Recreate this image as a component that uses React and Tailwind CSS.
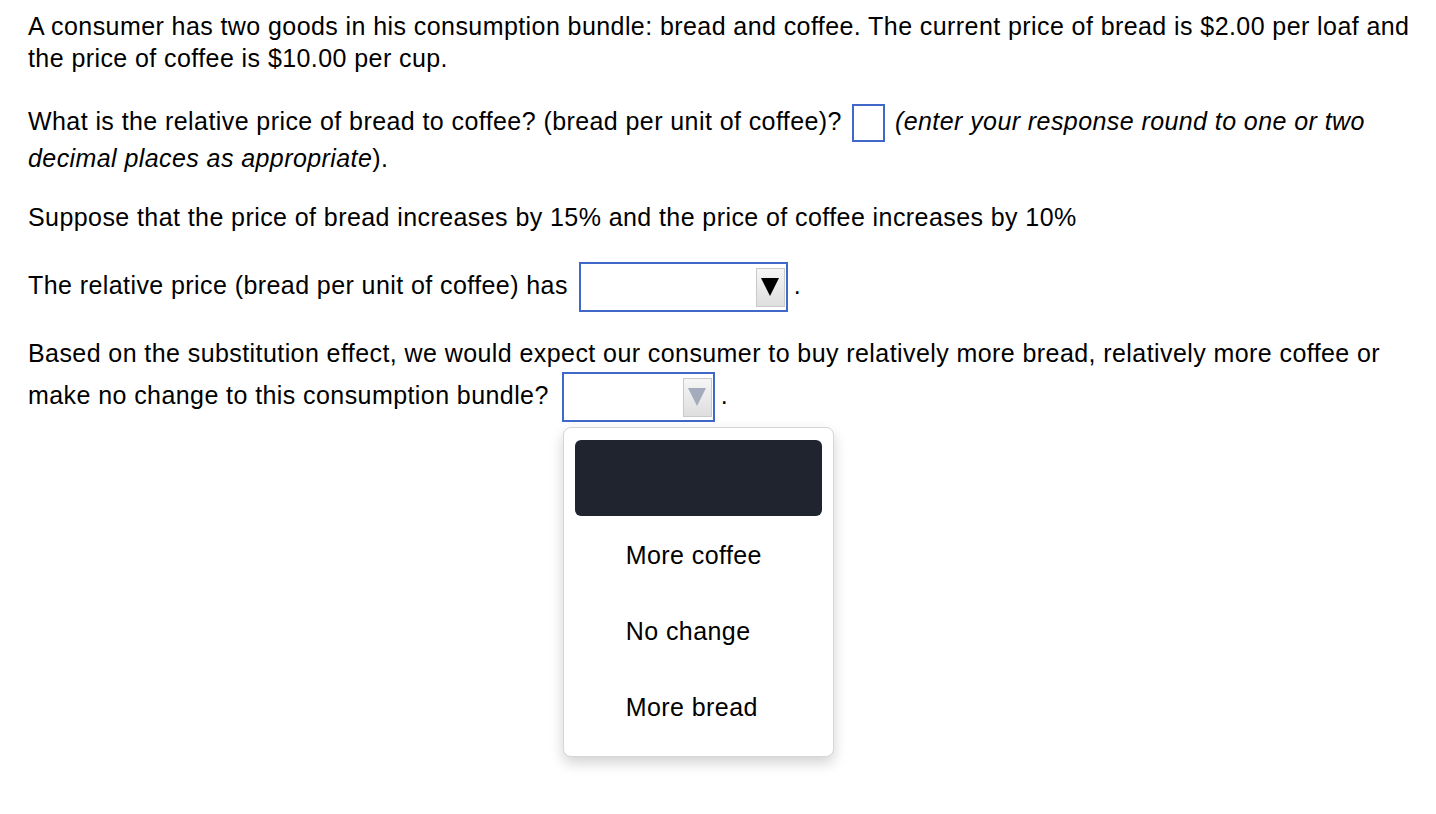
import React from "react";

const Arrow = ({ color }) => (
  <span className="flex h-[39px] w-[29px] items-center justify-center border border-[#c9c9c9] bg-gradient-to-b from-[#f6f6f6] to-[#dedede]">
    <svg width="20" height="22" viewBox="0 0 20 22">
      <polygon points="1,2 19,2 10,20" fill={color} />
    </svg>
  </span>
);

const Select = ({ width, color, gap }) => (
  <span
    className={`${gap} mr-[6px] inline-flex h-[50px] ${width} items-center justify-end border-2 border-[#4068c8] bg-white pr-[1px] align-middle`}
  >
    <Arrow color={color} />
  </span>
);

const App = () => {
  return (
    <div className="relative min-h-[814px] bg-white pl-[28px] pr-[13px] pt-[10px] text-[25px] tracking-[0.42px] text-black font-['Liberation_Sans',Arial,sans-serif]">
      {/* Intro */}
      <p className="leading-[32px]">
        A consumer has two goods in his consumption bundle: bread and coffee. The current price of bread is $2.00 per loaf and
        the price of coffee is $10.00 per cup.
      </p>

      {/* Question 1 */}
      <p className="mt-[30px] leading-[33px]">
        What is the relative price of bread to coffee? (bread per unit of coffee)?
        <span className="mx-[10px] inline-block h-[38px] w-[33px] border-2 border-[#4068c8] align-middle" />
        <i>(enter your response round to one or two decimal places as appropriate</i>).
      </p>

      <p className="mt-[26px] leading-[32px]">
        Suppose that the price of bread increases by 15% and the price of coffee increases by 10%
      </p>

      {/* Question 2 */}
      <p className="mt-[27px] leading-[50px]">
        The relative price (bread per unit of coffee) has
        <Select gap="ml-[11px]" width="w-[209px]" color="#000000" />.
      </p>

      {/* Question 3 */}
      <div className="relative mt-[22px] leading-[38px]">
        <p>
          Based on the substitution effect, we would expect our consumer to buy relatively more bread, relatively more coffee or
          make no change to this consumption bundle?
          <span className="relative inline-block align-middle">
            <Select gap="ml-[13px]" width="w-[153px]" color="#a3abbd" />
            {/* Open menu */}
            <span className="absolute left-[14px] top-[55px] z-10 flex h-[330px] w-[271px] flex-col rounded-[8px] border border-[#d6d6d6] bg-white px-[11px] pt-[12px] leading-normal shadow-[0_6px_14px_rgba(0,0,0,0.18)]">
              <span className="h-[76px] w-full rounded-[6px] bg-[#20242f]" />
              <span className="flex h-[76px] items-center pl-[51px] pt-[3px]">More coffee</span>
              <span className="flex h-[76px] items-center pl-[51px] pt-[3px]">No change</span>
              <span className="flex h-[76px] items-center pl-[51px] pt-[3px]">More bread</span>
            </span>
          </span>
          .
        </p>
      </div>
    </div>
  );
};

export default App;
